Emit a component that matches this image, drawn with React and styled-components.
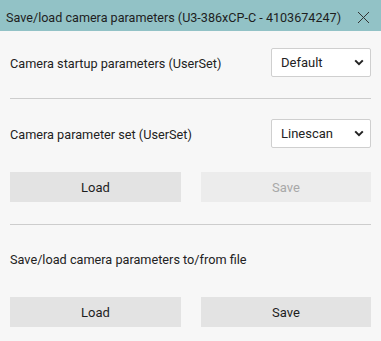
import React from "react";
import styled, { createGlobalStyle } from "styled-components";

const Global = createGlobalStyle`
  html, body { margin: 0; padding: 0; background: #f7f7f7; }
  body { font-family: Roboto, "Noto Sans", sans-serif; color: #222; }
  * { box-sizing: border-box; }
`;

const Dialog = styled.div`
  width: 381px;
  height: 341px;
  background: #f7f7f7;
  display: flex;
  flex-direction: column;
`;

const TitleBar = styled.div`
  height: 31px;
  background: #92c2c6;
  display: flex;
  align-items: center;
  justify-content: space-between;
  padding: 3px 11px 0 6px;
  font-size: 12.6px;
  color: #1e1e1e;
`;

const CloseButton = styled.div`
  width: 14px;
  height: 14px;
  display: flex;
  align-items: center;
  justify-content: center;
`;

const Body = styled.div`
  display: flex;
  flex-direction: column;
  padding: 17px 10px 0 10px;
`;

const Row = styled.div`
  display: flex;
  align-items: center;
  justify-content: space-between;
  height: 29px;
`;

const Label = styled.div`
  font-size: 12.7px;
  color: #222;
  padding-top: 1px;
`;

const Select = styled.div`
  width: 100px;
  height: 29px;
  background: #fff;
  border: 1px solid #cfcfcf;
  border-radius: 2px;
  display: flex;
  align-items: center;
  justify-content: space-between;
  padding: 0 6px 0 9px;
  font-size: 13px;
  color: #222;
`;

const Divider = styled.div`
  height: 1px;
  background: #cdcdcd;
  margin: ${(p) => p.$m};
`;

const ButtonRow = styled.div`
  display: grid;
  grid-template-columns: 171px 170px;
  column-gap: 20px;
  margin-top: ${(p) => p.$top}px;
`;

const Button = styled.div`
  height: 30px;
  display: flex;
  align-items: center;
  justify-content: center;
  font-size: 13px;
  background: ${(p) => (p.$disabled ? "#ececec" : "#e3e3e3")};
  color: ${(p) => (p.$disabled ? "#a8a8a8" : "#1e1e1e")};
`;

const TextRow = styled.div`
  font-size: 12.7px;
  color: #222;
  margin-top: 27px;
  height: 16px;
  line-height: 16px;
`;

const Chevron = () => (
  <svg width="10" height="7" viewBox="0 0 10 7">
    <path d="M1.2 1.4 L5 5.2 L8.8 1.4" fill="none" stroke="#222" strokeWidth="2" />
  </svg>
);

const CloseIcon = () => (
  <svg width="13" height="13" viewBox="0 0 13 13">
    <path d="M1 1 L12 12 M12 1 L1 12" stroke="#333" strokeWidth="1" fill="none" />
  </svg>
);

export default function App() {
  return (
    <>
      <Global />
      <Dialog>
        <TitleBar>
          <span>Save/load camera parameters (U3-386xCP-C - 4103674247)</span>
          <CloseButton>
            <CloseIcon />
          </CloseButton>
        </TitleBar>
        <Body>
          <Row>
            <Label>Camera startup parameters (UserSet)</Label>
            <Select>
              <span>Default</span>
              <Chevron />
            </Select>
          </Row>
          <Divider $m="21px 0 20px 0" />
          <Row>
            <Label>Camera parameter set (UserSet)</Label>
            <Select>
              <span>Linescan</span>
              <Chevron />
            </Select>
          </Row>
          <ButtonRow $top={24}>
            <Button>Load</Button>
            <Button $disabled>Save</Button>
          </ButtonRow>
          <Divider $m="22px 0 0 0" />
          <TextRow>Save/load camera parameters to/from file</TextRow>
          <ButtonRow $top={29}>
            <Button>Load</Button>
            <Button>Save</Button>
          </ButtonRow>
        </Body>
      </Dialog>
    </>
  );
}
